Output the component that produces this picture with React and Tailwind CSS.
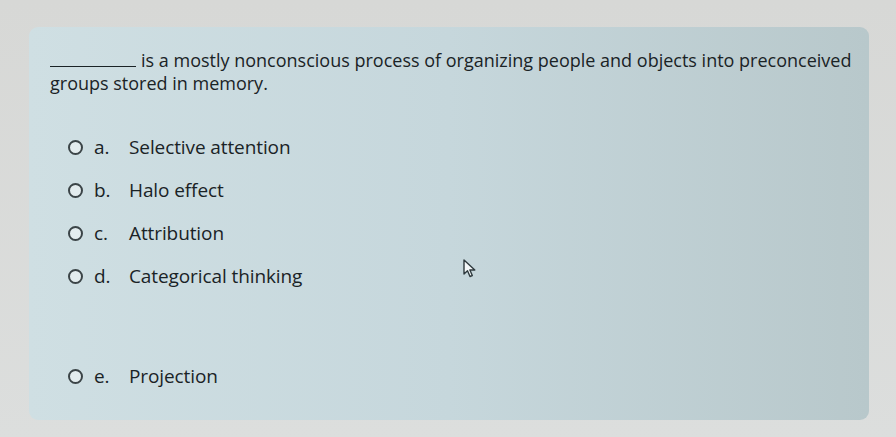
import React from 'react';

const options = [
  { key: 'a.', label: 'Selective attention' },
  { key: 'b.', label: 'Halo effect' },
  { key: 'c.', label: 'Attribution' },
  { key: 'd.', label: 'Categorical thinking' },
];

function Option({ letter, label }) {
  return (
    <label className="flex items-center h-[43px] cursor-pointer">
      <span className="w-[15px] h-[15px] rounded-full border-2 border-[#3b4447] bg-[#e3ecee] shrink-0" />
      <span className="ml-[11px] w-[35px]">{letter}</span>
      <span>{label}</span>
    </label>
  );
}

function Cursor() {
  return (
    <svg className="absolute left-[463px] top-[259px]" width="14" height="20" viewBox="0 0 14 20">
      <path
        d="M1 1 L1 15 L4.5 11.8 L7 17.5 L9.3 16.5 L6.9 11 L11.8 11 Z"
        fill="#f4f8f9"
        stroke="#2f3a3e"
        strokeWidth="1.4"
        strokeLinejoin="round"
      />
    </svg>
  );
}

export default function App() {
  return (
    <div
      className="relative w-[896px] h-[437px] overflow-hidden bg-gradient-to-b from-[#d7d8d6] to-[#dcdedd] text-[#1a2326]"
      style={{ fontFamily: '"Open Sans", "Noto Sans", sans-serif' }}
    >
      <div className="pt-[27px] pl-[29px]">
        <div className="w-[840px] h-[393px] rounded-[9px] bg-gradient-to-r from-[#cfdfe3] via-[#c6d7dc] to-[#b8c8cb] pl-[21px] pr-[10px] pt-[22px]">
          <p className="text-[18px] leading-[23px]">
            <span className="inline-block w-[86px] border-b-[1.5px] border-[#1a2326] mr-[5px] align-baseline" />
            is a mostly nonconscious process of organizing people and objects into preconceived groups stored in memory.
          </p>
          <div className="mt-[31px] ml-[18px] text-[19px] tracking-[-0.1px]">
            {options.map((o) => (
              <Option key={o.key} letter={o.key} label={o.label} />
            ))}
            <div className="h-[57px]" />
            <Option letter="e." label="Projection" />
          </div>
        </div>
      </div>
      <Cursor />
    </div>
  );
}
